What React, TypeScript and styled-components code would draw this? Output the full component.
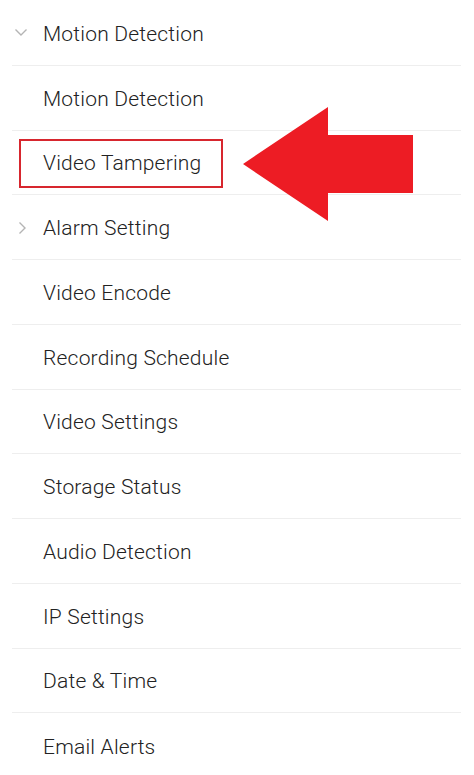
import React from 'react';
import styled, { createGlobalStyle } from 'styled-components';

const GlobalStyle = createGlobalStyle`
  html, body {
    margin: 0;
    padding: 0;
    background: #ffffff;
  }
  body {
    font-family: Roboto, "Noto Sans", Arial, sans-serif;
  }
`;

type Item = {
  label: string;
  toggle?: 'open' | 'closed';
  highlight?: boolean;
};

const items: Array<Item> = [
  { label: 'Motion Detection', toggle: 'open' },
  { label: 'Motion Detection' },
  { label: 'Video Tampering', highlight: true },
  { label: 'Alarm Setting', toggle: 'closed' },
  { label: 'Video Encode' },
  { label: 'Recording Schedule' },
  { label: 'Video Settings' },
  { label: 'Storage Status' },
  { label: 'Audio Detection' },
  { label: 'IP Settings' },
  { label: 'Date & Time' },
  { label: 'Email Alerts' },
];

const Chevron = ({ dir }: { dir: 'open' | 'closed' }) => (
  <ChevronBox $dir={dir}>
    <svg width="14" height="14" viewBox="0 0 14 14" fill="none">
      <path d="M1.5 4.5 L7 10 L12.5 4.5" stroke="#b4b4b4" strokeWidth="1.4" />
    </svg>
  </ChevronBox>
);

const MenuRow = ({ item, last }: { item: Item; last: boolean }) => (
  <Row $last={last}>
    <IconSlot>{item.toggle && <Chevron dir={item.toggle} />}</IconSlot>
    {item.highlight ? (
      <Marked>
        <Label>{item.label}</Label>
      </Marked>
    ) : (
      <Label>{item.label}</Label>
    )}
    {item.highlight && <Pointer />}
  </Row>
);

const Pointer = () => (
  <ArrowWrap>
    <svg width="172" height="116" viewBox="0 0 172 116">
      <polygon points="0,57 85,0 85,28 170,28 170,86 85,86 85,114" fill="#ed1c24" />
    </svg>
  </ArrowWrap>
);

export default function App() {
  return (
    <React.Fragment>
      <GlobalStyle />
      <Menu>
        {items.map((item, index) => (
          <MenuRow key={`${item.label}|${index}`} item={item} last={index === items.length - 1} />
        ))}
      </Menu>
    </React.Fragment>
  );
}

const Menu = styled.div`
  width: 474px;
  padding: 1px 13px 0 12px;
  box-sizing: border-box;
`;

const Row = styled.div<{ $last: boolean }>`
  position: relative;
  height: 64.75px;
  box-sizing: border-box;
  display: flex;
  align-items: center;
  padding-top: 2px;
  border-bottom: ${(p) => (p.$last ? 'none' : '1.5px solid #eeeeee')};
`;

const IconSlot = styled.div`
  width: 31px;
  display: flex;
  align-items: center;
`;

const ChevronBox = styled.span<{ $dir: 'open' | 'closed' }>`
  display: inline-flex;
  margin-left: ${(p) => (p.$dir === 'open' ? '2px' : '3px')};
  margin-top: ${(p) => (p.$dir === 'open' ? '-4px' : '0')};
  transform: ${(p) => (p.$dir === 'open' ? 'none' : 'rotate(-90deg)')};
`;

const Label = styled.span`
  font-size: 21px;
  font-weight: 350;
  color: #222222;
  letter-spacing: 0.2px;
`;

const Marked = styled.div`
  margin-left: -24px;
  padding: 0 0 0 22px;
  width: 204px;
  height: 49px;
  box-sizing: border-box;
  display: flex;
  align-items: center;
  border: 2px solid #d7262e;
`;

const ArrowWrap = styled.div`
  position: absolute;
  left: 231px;
  top: -24px;
  display: flex;
`;
